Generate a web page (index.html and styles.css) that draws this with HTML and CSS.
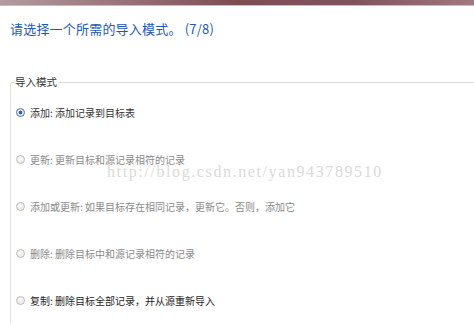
FILE: index.html
```html
<!doctype html>
<html lang="zh-CN">
<head>
	<meta charset="UTF-8">
	<title>导入向导</title>
<link rel="stylesheet" href="styles.css">
</head>
<body>
<div class="titlebar"></div>
<h1 class="heading">请选择一个所需的导入模式。 (7/8)</h1>
<fieldset class="mode">
	<legend>导入模式</legend>
	<label class="opt"><span class="radio on"></span>添加: 添加记录到目标表</label>
	<label class="opt off"><span class="radio"></span>更新: 更新目标和源记录相符的记录</label>
	<label class="opt off"><span class="radio"></span>添加或更新: 如果目标存在相同记录，更新它。否则，添加它</label>
	<label class="opt off"><span class="radio"></span>删除: 删除目标中和源记录相符的记录</label>
	<label class="opt dark"><span class="radio"></span>复制: 删除目标全部记录，并从源重新导入</label>
</fieldset>
<div class="watermark">http://blog.csdn.net/yan943789510</div>
</body>
</html>
```

FILE: styles.css
```css
*{
	margin:0;
	padding:0;
}
body{
	font-family:"Noto Sans CJK SC","Noto Sans",sans-serif;
	color:#333;
	background:#fff;
	position:relative;
	height:325px;
	overflow:hidden;
}
.titlebar{
	height:5px;
	background:linear-gradient(to right,#b39b9f 0%,#9a7479 25%,#7c4c53 50%,#80535a 75%,#a0797e 100%);
	border-bottom:1px solid #cdbcbe;
}
.heading{
	font-size:13px;
	font-weight:normal;
	line-height:18px;
	color:#1d5ab3;
	margin:14px 0 0 10px;
	letter-spacing:0.2px;
}
.mode{
	margin:37px -10px 0 10px;
	border:none;
	border-top:1px solid #dcdcdc;
	border-left:1px solid #e2e2e2;
	border-top-left-radius:3px;
	padding:0 0 0 5px;
}
.mode legend{
	font-size:10.5px;
	line-height:14px;
	color:#333;
	margin-left:-2px;
	padding:0 1px;
}
.opt{
	display:flex;
	align-items:center;
	height:47px;
	font-size:10px;
	color:#333;
}
.opt.off{
	color:#8a8a8a;
}
.opt.dark{
	color:#1e1e1e;
}
.radio{
	width:9px;
	height:9px;
	border:1px solid #bdbdbd;
	border-radius:50%;
	background:radial-gradient(circle at 50% 40%,#fafafa 0%,#e4e4e4 100%);
	box-sizing:border-box;
	margin-right:5px;
	flex:none;
}
.radio.on{
	border-color:#5b7596;
	background:radial-gradient(circle,#3c74c4 0%,#2a5aa3 30%,#e8eef4 45%,#d0d8e2 100%);
}
.watermark{
	position:absolute;
	left:107px;
	top:162px;
	font-family:"Liberation Serif",serif;
	font-size:16px;
	line-height:20px;
	letter-spacing:1.6px;
	color:#dadada;
}
```
